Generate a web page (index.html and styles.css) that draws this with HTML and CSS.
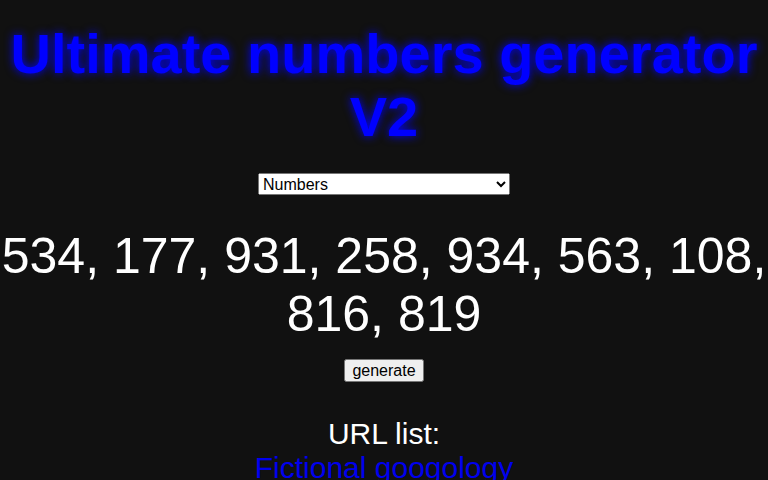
FILE: index.html
```html
<!DOCTYPE html>
<html lang="en">

<head>
    <meta charset="UTF-8">
    <title>Ultimate numbers generator V2</title>
    <link rel="stylesheet" href="styles.css">
</head>

<body>
    <h1 class="title">Ultimate numbers generator V2</h1>
    <div class="controls">
        <select class="mode">
            <option>Numbers</option>
            <option>Words</option>
        </select>
    </div>
    <p class="output">534, 177, 931, 258, 934, 563, 108, 816, 819</p>
    <div class="controls">
        <button class="generate">generate</button>
    </div>
    <div class="links">
        <p class="links-title">URL list:</p>
        <a href="#">Fictional googology</a>
    </div>
</body>

</html>
```
FILE: styles.css
```css
body {
    margin: 0;
    background: #111;
    color: #fff;
    font-family: "Liberation Sans", Arial, sans-serif;
    text-align: center;
}

.title {
    margin: 22px 0 25px;
    font-size: 56px;
    line-height: 63px;
    color: #00f;
    text-shadow: 0 0 10px #00f;
}

.controls {
    margin: 0;
}

.mode {
    width: 252px;
    height: 22px;
    font-size: 16px;
    font-family: "Liberation Sans", Arial, sans-serif;
}

.output {
    margin: 32px 0 16px;
    font-size: 50px;
    line-height: 58px;
}

.generate {
    height: 23px;
    font-size: 16px;
    font-family: "Liberation Sans", Arial, sans-serif;
}

.links {
    margin-top: 35px;
    font-size: 30px;
}

.links-title {
    margin: 0;
    line-height: 34px;
}

.links a {
    display: inline-block;
    line-height: 32px;
    color: #00e;
}
```
